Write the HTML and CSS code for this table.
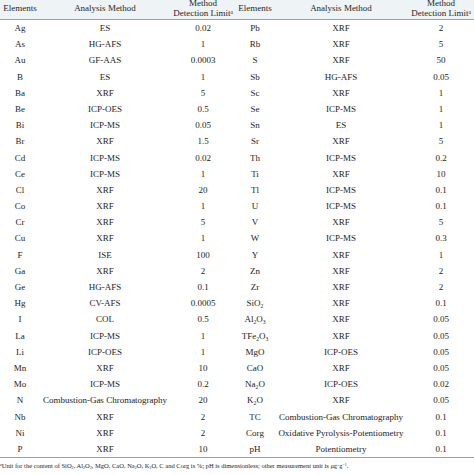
FILE: index.html
```html
<!DOCTYPE html>
<html>
<head>
<meta charset="utf-8">
<link rel="stylesheet" href="styles.css">
</head>
<body>
<div class="tbl">
  <div class="row head">
    <div class="h"><span>Elements</span></div>
    <div class="h"><span>Analysis Method</span></div>
    <div class="h"><span>Method<br>Detection Limit<sup>a</sup></span></div>
    <div class="h"><span>Elements</span></div>
    <div class="h"><span>Analysis Method</span></div>
    <div class="h"><span>Method<br>Detection Limit<sup>a</sup></span></div>
  </div>
  <div class="body">
    <div class="row"><div class="c">Ag</div><div class="c">ES</div><div class="c">0.02</div><div class="c">Pb</div><div class="c">XRF</div><div class="c">2</div></div>
    <div class="row"><div class="c">As</div><div class="c">HG-AFS</div><div class="c">1</div><div class="c">Rb</div><div class="c">XRF</div><div class="c">5</div></div>
    <div class="row"><div class="c">Au</div><div class="c">GF-AAS</div><div class="c">0.0003</div><div class="c">S</div><div class="c">XRF</div><div class="c">50</div></div>
    <div class="row"><div class="c">B</div><div class="c">ES</div><div class="c">1</div><div class="c">Sb</div><div class="c">HG-AFS</div><div class="c">0.05</div></div>
    <div class="row"><div class="c">Ba</div><div class="c">XRF</div><div class="c">5</div><div class="c">Sc</div><div class="c">XRF</div><div class="c">1</div></div>
    <div class="row"><div class="c">Be</div><div class="c">ICP-OES</div><div class="c">0.5</div><div class="c">Se</div><div class="c">ICP-MS</div><div class="c">1</div></div>
    <div class="row"><div class="c">Bi</div><div class="c">ICP-MS</div><div class="c">0.05</div><div class="c">Sn</div><div class="c">ES</div><div class="c">1</div></div>
    <div class="row"><div class="c">Br</div><div class="c">XRF</div><div class="c">1.5</div><div class="c">Sr</div><div class="c">XRF</div><div class="c">5</div></div>
    <div class="row"><div class="c">Cd</div><div class="c">ICP-MS</div><div class="c">0.02</div><div class="c">Th</div><div class="c">ICP-MS</div><div class="c">0.2</div></div>
    <div class="row"><div class="c">Ce</div><div class="c">ICP-MS</div><div class="c">1</div><div class="c">Ti</div><div class="c">XRF</div><div class="c">10</div></div>
    <div class="row"><div class="c">Cl</div><div class="c">XRF</div><div class="c">20</div><div class="c">Tl</div><div class="c">ICP-MS</div><div class="c">0.1</div></div>
    <div class="row"><div class="c">Co</div><div class="c">XRF</div><div class="c">1</div><div class="c">U</div><div class="c">ICP-MS</div><div class="c">0.1</div></div>
    <div class="row"><div class="c">Cr</div><div class="c">XRF</div><div class="c">5</div><div class="c">V</div><div class="c">XRF</div><div class="c">5</div></div>
    <div class="row"><div class="c">Cu</div><div class="c">XRF</div><div class="c">1</div><div class="c">W</div><div class="c">ICP-MS</div><div class="c">0.3</div></div>
    <div class="row"><div class="c">F</div><div class="c">ISE</div><div class="c">100</div><div class="c">Y</div><div class="c">XRF</div><div class="c">1</div></div>
    <div class="row"><div class="c">Ga</div><div class="c">XRF</div><div class="c">2</div><div class="c">Zn</div><div class="c">XRF</div><div class="c">2</div></div>
    <div class="row"><div class="c">Ge</div><div class="c">HG-AFS</div><div class="c">0.1</div><div class="c">Zr</div><div class="c">XRF</div><div class="c">2</div></div>
    <div class="row"><div class="c">Hg</div><div class="c">CV-AFS</div><div class="c">0.0005</div><div class="c">SiO<sub>2</sub></div><div class="c">XRF</div><div class="c">0.1</div></div>
    <div class="row"><div class="c">I</div><div class="c">COL</div><div class="c">0.5</div><div class="c">Al<sub>2</sub>O<sub>3</sub></div><div class="c">XRF</div><div class="c">0.05</div></div>
    <div class="row"><div class="c">La</div><div class="c">ICP-MS</div><div class="c">1</div><div class="c">TFe<sub>2</sub>O<sub>3</sub></div><div class="c">XRF</div><div class="c">0.05</div></div>
    <div class="row"><div class="c">Li</div><div class="c">ICP-OES</div><div class="c">1</div><div class="c">MgO</div><div class="c">ICP-OES</div><div class="c">0.05</div></div>
    <div class="row"><div class="c">Mn</div><div class="c">XRF</div><div class="c">10</div><div class="c">CaO</div><div class="c">XRF</div><div class="c">0.05</div></div>
    <div class="row"><div class="c">Mo</div><div class="c">ICP-MS</div><div class="c">0.2</div><div class="c">Na<sub>2</sub>O</div><div class="c">ICP-OES</div><div class="c">0.02</div></div>
    <div class="row"><div class="c">N</div><div class="c">Combustion-Gas Chromatography</div><div class="c">20</div><div class="c">K<sub>2</sub>O</div><div class="c">XRF</div><div class="c">0.05</div></div>
    <div class="row"><div class="c">Nb</div><div class="c">XRF</div><div class="c">2</div><div class="c">TC</div><div class="c">Combustion-Gas Chromatography</div><div class="c">0.1</div></div>
    <div class="row"><div class="c">Ni</div><div class="c">XRF</div><div class="c">2</div><div class="c">Corg</div><div class="c">Oxidative Pyrolysis-Potentiometry</div><div class="c">0.1</div></div>
    <div class="row"><div class="c">P</div><div class="c">XRF</div><div class="c">10</div><div class="c">pH</div><div class="c">Potentiometry</div><div class="c">0.1</div></div>
  </div>
  <div class="note"><sup>a</sup>Unit for the content of SiO<sub>2</sub>, Al<sub>2</sub>O<sub>3</sub>, MgO, CaO, Na<sub>2</sub>O, K<sub>2</sub>O, C and Corg is %; pH is dimensionless; other measurement unit is μg·g<sup>−1</sup>.</div>
</div>
</body>
</html>
```

FILE: styles.css
```css
html, body {
  margin: 0;
  padding: 0;
  background: #ffffff;
}
body {
  font-family: "Liberation Serif", "Times New Roman", serif;
  color: #1c1c1c;
  font-size: 9px;
  width: 474px;
  height: 475px;
  overflow: hidden;
}
.tbl {
  width: 474px;
}
.row {
  display: grid;
  grid-template-columns: 40px 130px 66px 38px 134px 66px;
  height: 16.2px;
}
.c {
  text-align: center;
  white-space: nowrap;
  line-height: 16.2px;
}
.head {
  height: 19px;
  background: #eef3f6;
  border-bottom: 1px solid #86a8b2;
  color: #262626;
}
.h {
  display: flex;
  align-items: center;
  justify-content: center;
  text-align: center;
  white-space: nowrap;
  line-height: 10px;
  height: 15px;
  padding-bottom: 4px;
}
.body {
  border-bottom: 1px solid #86a8b2;
}
sub {
  font-size: 0.62em;
  vertical-align: -0.3em;
  line-height: 0;
}
sup {
  font-size: 0.6em;
  vertical-align: 0.45em;
  line-height: 0;
}
.note {
  font-size: 6.5px;
  line-height: 10px;
  padding-top: 3px;
  white-space: nowrap;
}
```
